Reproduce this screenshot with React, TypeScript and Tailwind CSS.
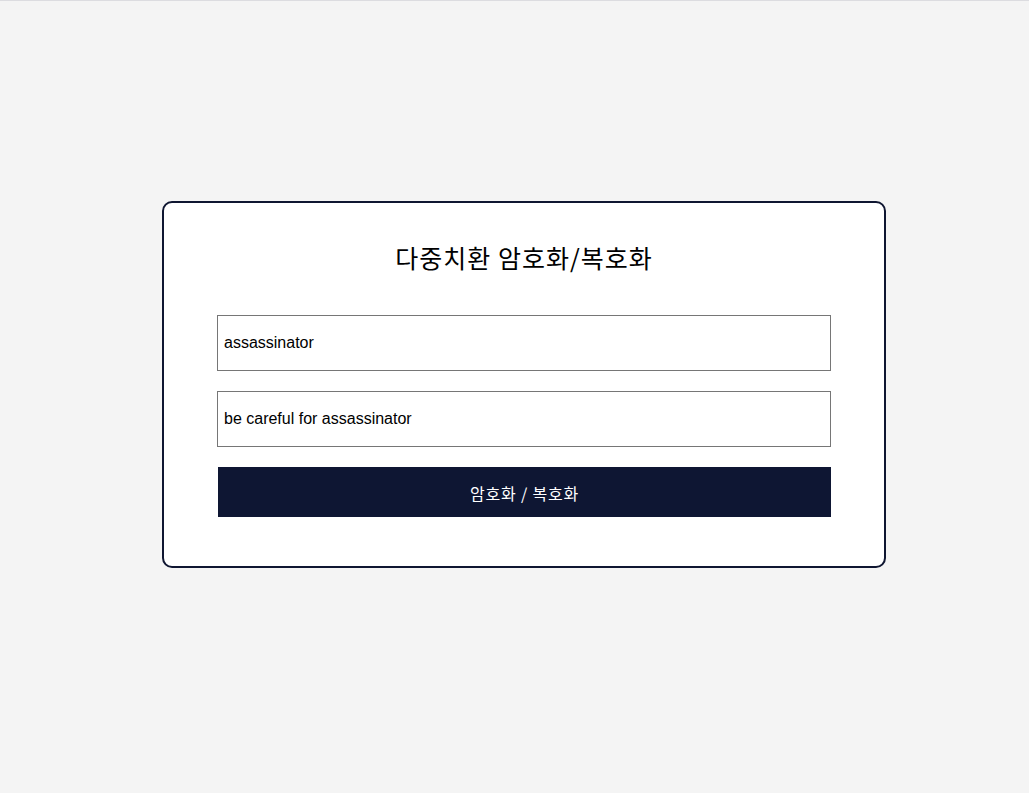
import React, { useState } from "react";

export default function App() {
  const [key, setKey] = useState("assassinator");
  const [text, setText] = useState("be careful for assassinator");
  return (
    <div className="min-h-[793px] w-full bg-[#f4f4f4] border-t border-[#dcdce0] pt-[200px] pl-[162px] font-['Liberation_Sans','Noto_Sans_CJK_KR',sans-serif]">
      <div className="w-[724px] h-[367px] bg-white border-2 border-[#0f1631] rounded-[10px] px-[53px] pt-[38px]">
        <h2 className="text-center text-[25px] leading-[32px] tracking-[1px] text-black mb-[42px] font-['Noto_Sans_CJK_KR','Liberation_Sans',sans-serif]">
          다중치환 암호화/복호화
        </h2>
        <div className="flex flex-col gap-[20px]">
          <input
            value={key}
            onChange={(e) => setKey(e.target.value)}
            className="w-[614px] h-[56px] border border-[#767676] px-[6px] text-[16px] text-black outline-none"
          />
          <input
            value={text}
            onChange={(e) => setText(e.target.value)}
            className="w-[614px] h-[56px] border border-[#767676] px-[6px] text-[16px] text-black outline-none"
          />
          <button className="ml-[1px] w-[613px] h-[50px] bg-[#0e1633] text-white text-[16px] leading-[20px] pt-[2px] tracking-[0.8px] font-['Noto_Sans_CJK_KR','Liberation_Sans',sans-serif]">
            암호화 / 복호화
          </button>
        </div>
      </div>
    </div>
  );
}
